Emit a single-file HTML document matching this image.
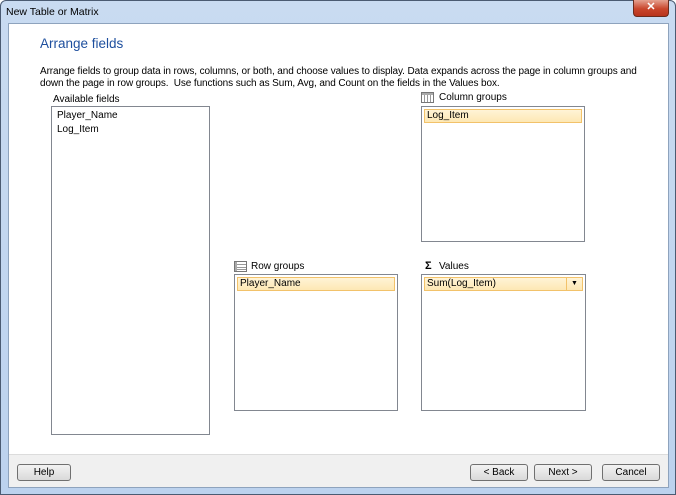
<!DOCTYPE html>
<html><head><style>
*{margin:0;padding:0;box-sizing:border-box}
body{width:676px;height:495px;background:#fff;font-family:"Liberation Sans",sans-serif;font-size:11px;color:#000;position:relative;overflow:hidden}
.frame{position:absolute;left:0;top:0;width:676px;height:495px;background:linear-gradient(#c9dbf1,#bcd2ee);border:1px solid #4b5b72;border-radius:6px 6px 0 0}
.title{position:absolute;left:6px;top:6px;font-size:10.5px;color:#000}
.close{position:absolute;left:633px;top:0;width:36px;height:17px;background:linear-gradient(#e5a190,#c9462c 55%,#b8341c);border:1px solid #6b2b1d;border-top:none;border-radius:0 0 4px 4px;color:#fff;font-weight:bold;font-size:11px;text-align:center;line-height:15px}
.client{position:absolute;left:8px;top:23px;width:661px;height:465px;background:#fff;border:1px solid #8ea3bd}
.footer{position:absolute;left:0;top:430px;width:659px;height:33px;background:#f0f0f0;border-top:1px solid #dcdcdc}
.h{position:absolute;left:31px;top:12px;font-size:13.5px;color:#1e4f9e}
.desc{position:absolute;left:31px;top:42px;width:640px;line-height:12px;font-size:10px;letter-spacing:-0.1px}
.lbl{position:absolute;font-size:10px}
.box{position:absolute;background:#fff;border:1px solid #828790}
.item{position:absolute;left:2px;right:2px;top:2px;height:14px;background:linear-gradient(#fff4d6,#fde8b4);border:1px solid #f2c26a;padding-left:2px;line-height:12px;font-size:10px}
.t{position:absolute;left:5px;font-size:10px}
.btn{position:absolute;top:9px;height:17px;border:1px solid #707070;border-radius:3px;background:linear-gradient(#f2f2f2,#e6e6e6 50%,#d9d9d9);font-size:10px;text-align:center;line-height:15px}
</style></head><body>
<div class="frame"></div>
<div class="title">New Table or Matrix</div>
<div class="close">✕</div>
<div class="client">
<div class="h">Arrange fields</div>
<div class="desc">Arrange fields to group data in rows, columns, or both, and choose values to display. Data expands across the page in column groups and<br>down the page in row groups.&nbsp; Use functions such as Sum, Avg, and Count on the fields in the Values box.</div>
<div class="lbl" style="left:44px;top:70px">Available fields</div>
<div class="box" style="left:42px;top:82px;width:159px;height:329px"><div class="t" style="top:3px">Player_Name</div><div class="t" style="top:17px">Log_Item</div></div>
<svg style="position:absolute;left:412px;top:68px" width="13" height="11"><rect x="0.5" y="0.5" width="12" height="10" fill="#fff" stroke="#777"/><rect x="1" y="1" width="11" height="2" fill="#aaa"/><path d="M3.5 3v7M6.5 3v7M9.5 3v7" stroke="#999"/></svg>
<div class="lbl" style="left:430px;top:68px">Column groups</div>
<div class="box" style="left:412px;top:82px;width:164px;height:136px"><div class="item">Log_Item</div></div>
<svg style="position:absolute;left:225px;top:237px" width="13" height="11"><rect x="0.5" y="0.5" width="12" height="10" fill="#fff" stroke="#777"/><rect x="1" y="1" width="2" height="9" fill="#aaa"/><path d="M3 3.5h9M3 6.5h9M3 8.5h9" stroke="#999"/></svg>
<div class="lbl" style="left:242px;top:237px">Row groups</div>
<div class="box" style="left:225px;top:250px;width:164px;height:137px"><div class="item">Player_Name</div></div>
<div class="lbl" style="left:416px;top:236px;font-weight:bold;font-size:11px">Σ</div>
<div class="lbl" style="left:430px;top:237px">Values</div>
<div class="box" style="left:412px;top:250px;width:165px;height:137px"><div class="item">Sum(Log_Item)<span style="position:absolute;right:0;top:-1px;width:16px;height:14px;border-left:1px solid #f2c26a;text-align:center;font-size:7px;line-height:14px">▼</span></div></div>
<div class="footer">
<div class="btn" style="left:8px;width:54px">Help</div>
<div class="btn" style="left:461px;width:58px">&lt; Back</div>
<div class="btn" style="left:525px;width:58px">Next &gt;</div>
<div class="btn" style="left:593px;width:58px">Cancel</div>
</div>
</div>
</body></html>
